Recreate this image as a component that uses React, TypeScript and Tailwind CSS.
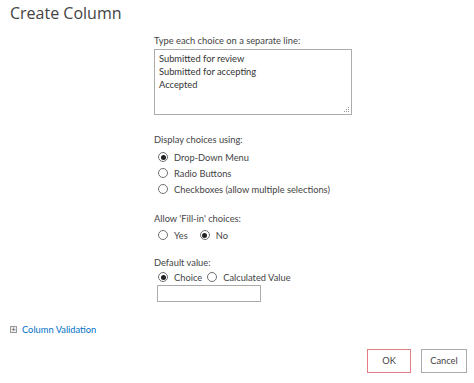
import React from "react";

function Radio({ checked }: { checked?: boolean }) {
  return (
    <span className="inline-flex items-center justify-center w-[10px] h-[10px] rounded-full border border-[#6f6f6f] bg-white shrink-0">
      {checked && <span className="w-[5px] h-[5px] rounded-full bg-[#222]" />}
    </span>
  );
}

function Opt({ checked, label }: { checked?: boolean; label: string }) {
  return (
    <div className="flex items-center gap-[6px] h-[16px]">
      <Radio checked={checked} />
      <span>{label}</span>
    </div>
  );
}

export default function App() {
  return (
    <div
      className="w-[474px] h-[383px] bg-white text-[#444] flex flex-col overflow-hidden"
      style={{ fontFamily: 'Lato, "Open Sans", sans-serif' }}
    >
      <div
        className="pl-[10px] pt-[3px] text-[16px] leading-[20px] text-[#444]"
        style={{ fontFamily: '"Open Sans", sans-serif' }}
      >
        Create Column
      </div>
      <div className="pl-[154px] pt-[11px] text-[9.3px] leading-[13px]">
        <div>Type each choice on a separate line:</div>
        <div className="relative mt-[2px] w-[198px] h-[66px] border border-[#ababab] px-[4px] py-[2px] text-[#333]">
          <div>Submitted for review</div>
          <div>Submitted for accepting</div>
          <div>Accepted</div>
          <svg className="absolute right-[1px] bottom-[1px]" width="7" height="7" viewBox="0 0 7 7">
            <rect x="5" y="1" width="1" height="1" fill="#999" />
            <rect x="3" y="3" width="1" height="1" fill="#999" />
            <rect x="5" y="3" width="1" height="1" fill="#999" />
            <rect x="1" y="5" width="1" height="1" fill="#999" />
            <rect x="3" y="5" width="1" height="1" fill="#999" />
            <rect x="5" y="5" width="1" height="1" fill="#999" />
          </svg>
        </div>
        <div className="mt-[18px]">Display choices using:</div>
        <div className="pl-[4px] mt-[3px] flex flex-col">
          <Opt checked label="Drop-Down Menu" />
          <Opt label="Radio Buttons" />
          <Opt label="Checkboxes (allow multiple selections)" />
        </div>
        <div className="mt-[15px]">Allow 'Fill-in' choices:</div>
        <div className="pl-[4px] mt-[2px] flex gap-[12px]">
          <Opt label="Yes" />
          <Opt checked label="No" />
        </div>
        <div className="mt-[13px]">Default value:</div>
        <div className="pl-[4px] mt-0 flex gap-[5px]">
          <Opt checked label="Choice" />
          <Opt label="Calculated Value" />
        </div>
        <div className="ml-[3px] mt-0 w-[104px] h-[17px] border border-[#ababab]" />
      </div>
      <div className="pl-[10px] mt-[21px] flex items-center gap-[5px] text-[9.3px] leading-[13px]">
        <span className="w-[7px] h-[7px] border border-[#999] bg-[#eee] flex items-center justify-center text-[7px] leading-none text-[#444]">+</span>
        <span className="text-[#0072c6]">Column Validation</span>
      </div>
      <div className="flex justify-end gap-[10px] pr-[7px] mt-[13px] text-[9.3px]">
        <button className="w-[44px] h-[24px] border border-[#e47c86] bg-white text-[#444]">OK</button>
        <button className="w-[46px] h-[24px] border border-[#ababab] bg-white text-[#444]">Cancel</button>
      </div>
    </div>
  );
}
